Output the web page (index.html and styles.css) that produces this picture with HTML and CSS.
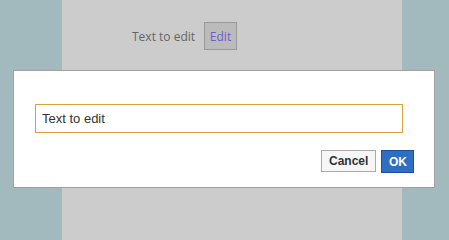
FILE: index.html
```html
<!DOCTYPE html>
<html>
<head>
<meta charset="utf-8">
<link rel="stylesheet" href="styles.css">
</head>
<body>
<div class="panel">
  <div class="row">
    <span class="label">Text to edit</span>
    <button class="edit">Edit</button>
  </div>
</div>
<div class="dialog">
  <input class="field" type="text" value="Text to edit">
  <div class="actions">
    <button class="btn cancel">Cancel</button>
    <button class="btn ok">OK</button>
  </div>
</div>
</body>
</html>
```

FILE: styles.css
```css
html, body {
  margin: 0;
  height: 100%;
}
body {
  background: #a2b9be;
  position: relative;
  overflow: hidden;
}
.panel {
  margin-left: 62px;
  width: 340px;
  height: 100%;
  min-height: 100vh;
  background: #cccccc;
}
.row {
  display: flex;
  align-items: center;
  padding: 22px 0 0 70px;
}
.label {
  font-family: "Open Sans", sans-serif;
  font-size: 12px;
  color: #666;
}
.edit {
  margin-left: 9px;
  width: 33px;
  height: 28px;
  padding: 0;
  background: #bbbbbb;
  border: 1px solid #999;
  font-family: "Open Sans", sans-serif;
  font-size: 12px;
  color: #6a5fc8;
}
.dialog {
  position: absolute;
  left: 13px;
  top: 70px;
  width: 420px;
  height: 116px;
  background: #fff;
  border: 1px solid #a0a0a0;
  display: flex;
  flex-direction: column;
}
.field {
  margin: 33px 0 0 21px;
  width: 368px;
  height: 29px;
  box-sizing: border-box;
  border: 1px solid #d9a13f;
  outline: none;
  padding: 0 6px;
  font-family: "Liberation Sans", Arial, sans-serif;
  font-size: 13px;
  color: #333;
}
.actions {
  display: flex;
  justify-content: flex-end;
  gap: 5px;
  margin: 17px 20px 0 0;
}
.btn {
  height: 23px;
  padding: 0 7px;
  font-family: "Liberation Sans", Arial, sans-serif;
  font-weight: bold;
  font-size: 12px;
  box-sizing: border-box;
}
.cancel {
  width: 55px;
  height: 22px;
  background: #f6f6f6;
  border: 1px solid #aaa;
  color: #333;
}
.ok {
  width: 33px;
  background: #2f6ec2;
  border: 1px solid #1d4f94;
  color: #fff;
}
```
